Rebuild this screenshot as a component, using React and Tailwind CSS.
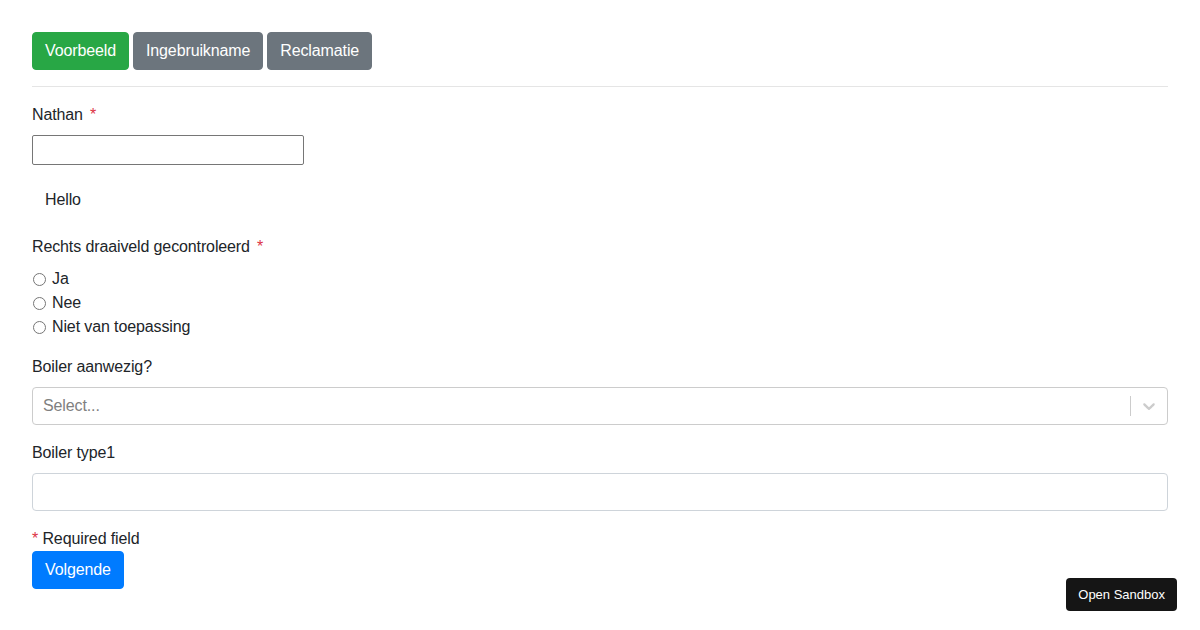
export default function App() {
  const font = { fontFamily: '"Liberation Sans", Arial, sans-serif' };
  return (
    <div className="min-h-[630px] bg-white p-8 text-[16px] leading-6 tracking-[-0.12px] text-[#212529]" style={font}>
      <div className="flex gap-1">
        <button className="h-[38px] rounded-[4px] border border-[#28a745] bg-[#28a745] px-3 text-white">Voorbeeld</button>
        <button className="h-[38px] rounded-[4px] border border-[#6c757d] bg-[#6c757d] px-3 text-white">Ingebruikname</button>
        <button className="h-[38px] rounded-[4px] border border-[#6c757d] bg-[#6c757d] px-3 text-white">Reclamatie</button>
      </div>
      <hr className="mt-4 mb-4 border-0 border-t border-[rgba(0,0,0,0.1)]" />

      <label className="block">
        Nathan<span className="ml-[7px] text-[#dc3545]">*</span>
      </label>
      <input type="text" className="mt-2 block h-[30px] w-[272px] rounded-[2px] border border-[#767676] px-1" />

      <div className="mt-[23px] pl-[13px]">Hello</div>

      <label className="mt-[23px] block">
        Rechts draaiveld gecontroleerd<span className="ml-[7px] text-[#dc3545]">*</span>
      </label>
      <div className="mt-2 flex flex-col">
        {["Ja", "Nee", "Niet van toepassing"].map((o) => (
          <label key={o} className="flex h-6 items-center">
            <input type="radio" name="rdg" className="m-0 mr-[6px] ml-px h-[13px] w-[13px]" />
            {o}
          </label>
        ))}
      </div>

      <label className="mt-4 block">Boiler aanwezig?</label>
      <div className="mt-2 flex h-[38px] items-center rounded-[4px] border border-[#cccccc] bg-white">
        <div className="flex-1 px-[10px] text-[#808080]">Select...</div>
        <span className="h-[20px] w-px bg-[#cccccc]"></span>
        <div className="p-2 text-[#cccccc]">
          <svg viewBox="0 0 20 20" width="20" height="20" fill="currentColor">
            <path d="M4.516 7.548c0.436-0.446 1.043-0.481 1.576 0l3.908 3.747 3.908-3.747c0.533-0.481 1.141-0.446 1.574 0 0.436 0.445 0.408 1.197 0 1.615-0.406 0.418-4.695 4.502-4.695 4.502-0.217 0.223-0.502 0.335-0.787 0.335s-0.57-0.112-0.789-0.335c0 0-4.287-4.084-4.695-4.502s-0.436-1.170 0-1.615z" />
          </svg>
        </div>
      </div>

      <label className="mt-4 block">Boiler type1</label>
      <input type="text" className="mt-2 block h-[38px] w-full rounded-[4px] border border-[#ced4da] px-3" />

      <div className="mt-4">
        <span className="text-[#dc3545]">*</span> Required field
      </div>
      <button className="h-[38px] rounded-[4px] border border-[#007bff] bg-[#007bff] px-3 text-white">Volgende</button>

      <button className="fixed right-[23px] bottom-[19px] h-[33px] rounded-[4px] bg-[#151515] px-[12px] text-[13px] tracking-normal text-white">
        Open Sandbox
      </button>
    </div>
  );
}
